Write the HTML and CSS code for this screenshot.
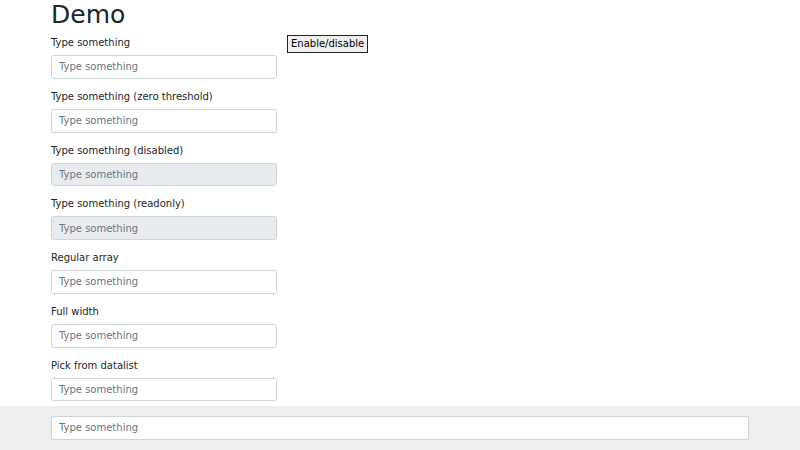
FILE: index.html
```html
<!DOCTYPE html>
<html lang="en">
<head>
<meta charset="utf-8">
<title>Demo</title>
<link rel="stylesheet" href="styles.css">
</head>
<body>
<main class="page">
  <h1 class="title">Demo</h1>
  <div class="row">
    <div class="col">
      <div class="group">
        <label class="label">Type something</label>
        <input class="control" type="text" placeholder="Type something">
      </div>
      <div class="group">
        <label class="label">Type something (zero threshold)</label>
        <input class="control" type="text" placeholder="Type something">
      </div>
      <div class="group">
        <label class="label">Type something (disabled)</label>
        <input class="control" type="text" placeholder="Type something" disabled>
      </div>
      <div class="group">
        <label class="label">Type something (readonly)</label>
        <input class="control readonly" type="text" placeholder="Type something" readonly>
      </div>
      <div class="group">
        <label class="label">Regular array</label>
        <input class="control" type="text" placeholder="Type something">
      </div>
      <div class="group">
        <label class="label">Full width</label>
        <input class="control" type="text" placeholder="Type something">
      </div>
      <div class="group">
        <label class="label">Pick from datalist</label>
        <input class="control" type="text" placeholder="Type something">
      </div>
    </div>
    <div class="col">
      <button class="toggle" type="button">Enable/disable</button>
    </div>
  </div>
</main>
<footer class="footer">
  <input class="control" type="text" placeholder="Type something">
</footer>
</body>
</html>
```
FILE: styles.css
```css
html, body {
  margin: 0;
  padding: 0;
}
body {
  font-family: "DejaVu Sans", sans-serif;
  font-size: 10px;
  line-height: 1.5;
  color: #212529;
  background: #fff;
  height: 450px;
  overflow: hidden;
}
.page {
  padding: 0 51px;
}
.title {
  margin: 0 0 5px 0;
  font-size: 25px;
  font-weight: 400;
  line-height: 1.2;
}
.row {
  display: grid;
  grid-template-columns: 226px 226px 1fr;
  column-gap: 10px;
  align-items: start;
}
.group {
  margin-bottom: 10px;
}
.label {
  display: block;
  margin-bottom: 5px;
  line-height: 15px;
}
.control {
  display: block;
  box-sizing: border-box;
  width: 100%;
  height: 23.75px;
  padding: 3px 7px;
  font-family: "DejaVu Sans", sans-serif;
  font-size: 10px;
  line-height: 15px;
  color: #495057;
  background: #fff;
  border: 1px solid #ced4da;
  border-radius: 2.5px;
  outline: none;
}
.control::placeholder {
  color: #6c757d;
  opacity: 1;
}
.control:disabled,
.control.readonly {
  background: #e9ecef;
}
.toggle {
  display: block;
  box-sizing: border-box;
  height: 18px;
  padding: 1px 3px;
  font-family: "DejaVu Sans", sans-serif;
  font-size: 10px;
  line-height: 14px;
  color: #000;
  background: #efefef;
  border: 1px solid #222;
  border-radius: 0;
}
.footer {
  position: fixed;
  left: 0;
  right: 0;
  bottom: 0;
  height: 44px;
  box-sizing: border-box;
  padding: 10px 51px;
  background: #eeeeee;
}
```
